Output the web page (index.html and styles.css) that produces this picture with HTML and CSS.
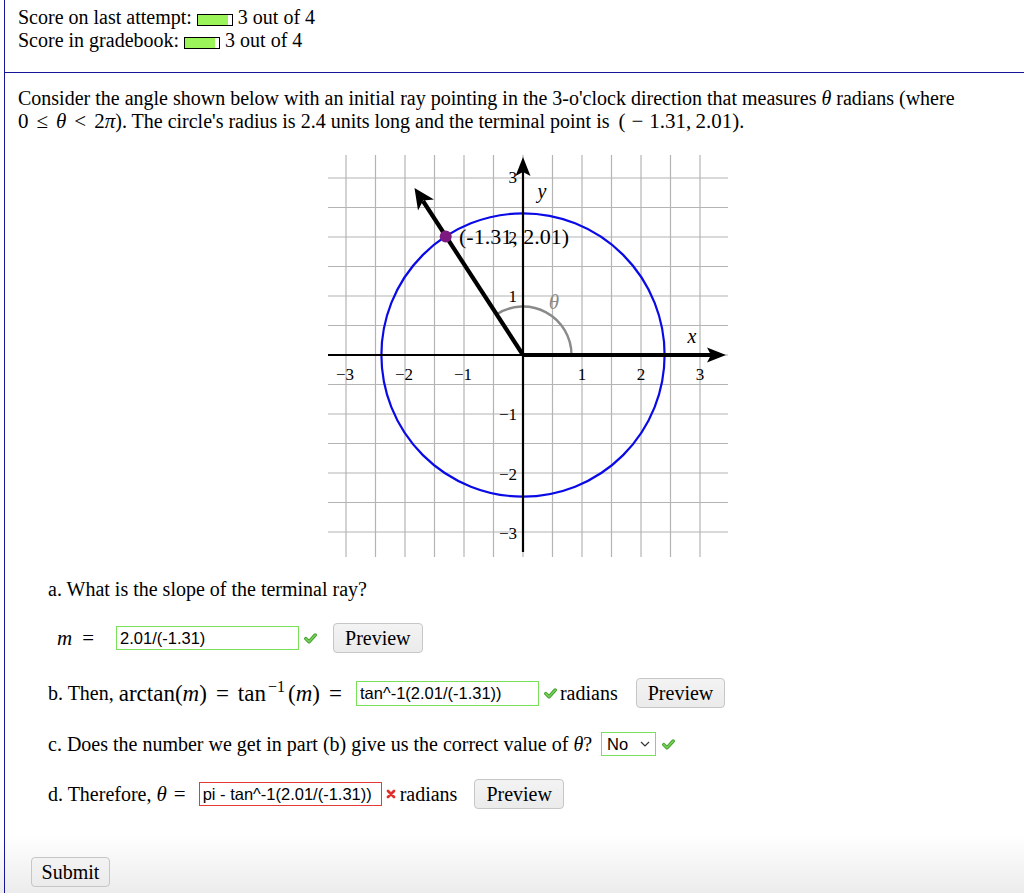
FILE: index.html
```html
<!DOCTYPE html>
<html lang="en">
<head>
<meta charset="utf-8">
<title>Angle question</title>
<link rel="stylesheet" href="styles.css">
</head>
<body>
<div class="page">
  <div class="scores">
    <div class="score-line">Score on last attempt: <span class="bar"><span class="fill"></span></span> 3 out of 4</div>
    <div class="score-line">Score in gradebook: <span class="bar"><span class="fill"></span></span> 3 out of 4</div>
  </div>
  <div class="main">
    <p class="intro">Consider the angle shown below with an initial ray pointing in the 3-o'clock direction that measures <i class="mi">θ</i> radians (where <span class="nowrap imath">0<span class="rel">≤</span><i class="mi">θ</i><span class="rel">&lt;</span>2<i class="mi">π</i></span>). The circle's radius is 2.4 units long and the terminal point is <span class="nowrap imath pt">(<span class="bin">−</span>1.31,&thinsp;2.01)</span>.</p>

    <svg class="graph" width="400" height="402" viewBox="0 0 400 402" xmlns="http://www.w3.org/2000/svg">
      <g class="grid" stroke="#b4b4b4" stroke-width="1.2">
        <line x1="18" y1="0" x2="18" y2="402"/>
        <line x1="47.5" y1="0" x2="47.5" y2="402"/>
        <line x1="77" y1="0" x2="77" y2="402"/>
        <line x1="106.5" y1="0" x2="106.5" y2="402"/>
        <line x1="136" y1="0" x2="136" y2="402"/>
        <line x1="165.5" y1="0" x2="165.5" y2="402"/>
        <line x1="195" y1="0" x2="195" y2="402"/>
        <line x1="224.5" y1="0" x2="224.5" y2="402"/>
        <line x1="254" y1="0" x2="254" y2="402"/>
        <line x1="283.5" y1="0" x2="283.5" y2="402"/>
        <line x1="313" y1="0" x2="313" y2="402"/>
        <line x1="342.5" y1="0" x2="342.5" y2="402"/>
        <line x1="372" y1="0" x2="372" y2="402"/>
        <line x1="0" y1="23" x2="400" y2="23"/>
        <line x1="0" y1="52.5" x2="400" y2="52.5"/>
        <line x1="0" y1="82" x2="400" y2="82"/>
        <line x1="0" y1="111.5" x2="400" y2="111.5"/>
        <line x1="0" y1="141" x2="400" y2="141"/>
        <line x1="0" y1="170.5" x2="400" y2="170.5"/>
        <line x1="0" y1="200" x2="400" y2="200"/>
        <line x1="0" y1="229.5" x2="400" y2="229.5"/>
        <line x1="0" y1="259" x2="400" y2="259"/>
        <line x1="0" y1="288.5" x2="400" y2="288.5"/>
        <line x1="0" y1="318" x2="400" y2="318"/>
        <line x1="0" y1="347.5" x2="400" y2="347.5"/>
        <line x1="0" y1="377" x2="400" y2="377"/>
      </g>
      <circle cx="195" cy="200" r="141.6" fill="none" stroke="#0a0ae6" stroke-width="2.2"/>
      <path d="M243.5 200 A48.5 48.5 0 0 0 168.5 159.4" fill="none" stroke="#8a8a8a" stroke-width="2.4"/>
      <line x1="0" y1="200" x2="383" y2="200" stroke="#000" stroke-width="2.2"/>
      <polygon points="398,200 379,192.5 383,200 379,207.5" fill="#000"/>
      <line x1="195" y1="397" x2="195" y2="17" stroke="#000" stroke-width="2.2"/>
      <polygon points="195,2 187.5,21 195,17 202.5,21" fill="#000"/>
      <line x1="195" y1="200" x2="383" y2="200" stroke="#000" stroke-width="4.2"/>
      <line x1="195" y1="200" x2="95" y2="46" stroke="#000" stroke-width="4.2"/>
      <polygon points="86.5,33 106,44.5 95.2,45.6 90,55.5" fill="#000"/>
      <circle cx="117.7" cy="81.4" r="6" fill="#7d1a80"/>
      <g class="ticks" font-family="'Liberation Serif', serif" font-size="17" fill="#000">
        <text x="17" y="225" text-anchor="middle">−3</text>
        <text x="76" y="225" text-anchor="middle">−2</text>
        <text x="135" y="225" text-anchor="middle">−1</text>
        <text x="254" y="225" text-anchor="middle">1</text>
        <text x="313" y="225" text-anchor="middle">2</text>
        <text x="372" y="225" text-anchor="middle">3</text>
        <text x="189" y="28" text-anchor="end">3</text>
        <text x="189" y="88" text-anchor="end">2</text>
        <text x="189" y="147" text-anchor="end">1</text>
        <text x="189" y="265" text-anchor="end">−1</text>
        <text x="189" y="325" text-anchor="end">−2</text>
        <text x="189" y="384" text-anchor="end">−3</text>
      </g>
      <text x="131" y="89" font-family="'Liberation Serif', serif" font-size="22" fill="#000">(-1.31, 2.01)</text>
      <text x="214" y="43" font-family="'Liberation Serif', serif" font-size="20" font-style="italic" text-anchor="middle" fill="#000">y</text>
      <text x="364" y="188" font-family="'Liberation Serif', serif" font-size="20" font-style="italic" text-anchor="middle" fill="#000">x</text>
      <text x="226" y="154" font-family="'Liberation Serif', serif" font-size="21" font-style="italic" text-anchor="middle" fill="#8a8a8a">θ</text>
    </svg>

    <div class="row row-a1"><span>a. What is the slope of the terminal ray?</span></div>

    <div class="row row-a2">
      <span class="math"><i class="mi">m</i><span class="rel">=</span></span>
      <span class="field ok field-a">2.01/(-1.31)</span>
      <svg class="mark" width="13" height="11" viewBox="0 0 13 11"><path d="M1.8 5.6 L5 8.8 L11.2 2" fill="none" stroke="#3f9f2a" stroke-width="3.4" stroke-linecap="round" stroke-linejoin="round"/><path d="M1.8 5.6 L5 8.8 L11.2 2" fill="none" stroke="#7ad05a" stroke-width="1.6" stroke-linecap="round" stroke-linejoin="round"/></svg>
      <button class="btn btn-a">Preview</button>
    </div>

    <div class="row row-b">
      <span>b. Then,</span>
      <span class="math math-b">arctan(<i class="mi">m</i>)<span class="rel">=</span>tan<sup class="sup">−1</sup>(<i class="mi">m</i>)<span class="rel rel-last">=</span></span>
      <span class="field ok field-b">tan^-1(2.01/(-1.31))</span>
      <svg class="mark" width="13" height="11" viewBox="0 0 13 11"><path d="M1.8 5.6 L5 8.8 L11.2 2" fill="none" stroke="#3f9f2a" stroke-width="3.4" stroke-linecap="round" stroke-linejoin="round"/><path d="M1.8 5.6 L5 8.8 L11.2 2" fill="none" stroke="#7ad05a" stroke-width="1.6" stroke-linecap="round" stroke-linejoin="round"/></svg>
      <span class="unit">radians</span>
      <button class="btn btn-b">Preview</button>
    </div>

    <div class="row row-c">
      <span>c. Does the number we get in part (b) give us the correct value of <i class="mi">θ</i>?</span>
      <span class="select ok">No<svg class="chev" width="10" height="6" viewBox="0 0 10 6"><path d="M1 1 L5 5 L9 1" fill="none" stroke="#333" stroke-width="1.2"/></svg></span>
      <svg class="mark mark-c" width="13" height="11" viewBox="0 0 13 11"><path d="M1.8 5.6 L5 8.8 L11.2 2" fill="none" stroke="#3f9f2a" stroke-width="3.4" stroke-linecap="round" stroke-linejoin="round"/><path d="M1.8 5.6 L5 8.8 L11.2 2" fill="none" stroke="#7ad05a" stroke-width="1.6" stroke-linecap="round" stroke-linejoin="round"/></svg>
    </div>

    <div class="row row-d">
      <span>d. Therefore, <span class="math"><i class="mi">θ</i><span class="rel">=</span></span></span>
      <span class="field bad field-d">pi - tan^-1(2.01/(-1.31))</span>
      <svg class="mark mark-x" width="10" height="10" viewBox="0 0 10 10"><path d="M2 2 L8 8 M8 2 L2 8" fill="none" stroke="#e0302c" stroke-width="2.8" stroke-linecap="round"/></svg>
      <span class="unit unit-d">radians</span>
      <button class="btn btn-d">Preview</button>
    </div>

    <button class="btn submit">Submit</button>
  </div>
</div>
</body>
</html>
```

FILE: styles.css
```css
html {
  height: 100%;
  overflow: hidden;
  background: linear-gradient(to bottom, #ffffff 0, #ffffff 835px, #ececec 893px);
}

body {
  margin: 0;
  font-family: "Liberation Serif", "Times New Roman", serif;
  font-size: 20px;
  line-height: 23px;
  color: #000;
}

.page {
  margin-left: 4px;
  border-left: 1px solid #16169a;
  min-height: 893px;
}

.scores {
  padding: 6px 13px 20px;
  height: 46px;
}

.bar {
  display: inline-block;
  width: 34px;
  height: 10px;
  border: 1px solid #000;
  vertical-align: -2px;
  background: #fff;
}

.bar .fill {
  display: block;
  width: 30px;
  height: 10px;
  background: #9bf55a;
}

.main {
  border-top: 1px solid #16169a;
  padding-top: 14px;
}

.intro {
  margin: 0 0 0 13px;
}

.nowrap {
  white-space: nowrap;
}

.imath {
  font-size: 21px;
}

.imath .rel {
  margin: 0 8px;
}

.pt {
  margin-left: 4px;
  word-spacing: 1px;
}

.mi {
  font-style: italic;
}

.rel {
  margin: 0 7px;
}

.bin {
  margin: 0 6px;
}

.graph {
  display: block;
  margin: 22px 0 0 323px;
}

.row {
  display: flex;
  align-items: center;
  height: 30px;
  margin-left: 43px;
  white-space: nowrap;
}

.row-a1 { margin-top: 17px; }
.row-a2 { margin-top: 19px; margin-left: 52px; }
.row-b { margin-top: 25px; }
.row-c { margin-top: 21px; }
.row-d { margin-top: 20px; }

.math {
  font-size: 21px;
}

.row-a2 .math .rel {
  margin: 0 0 0 10px;
}

.math-b {
  margin-left: 5px;
  font-size: 23px;
}

.math-b .rel {
  margin: 0 9px;
}

.math-b .rel-last {
  margin-right: 0;
}

.sup {
  font-size: 16px;
  vertical-align: 9px;
  line-height: 0;
  margin: 0 3px 0 2px;
}

.field {
  box-sizing: border-box;
  display: flex;
  align-items: center;
  width: 183px;
  height: 24px;
  padding: 0 3px;
  font-family: "Liberation Sans", Arial, sans-serif;
  font-size: 16.5px;
  background: #fff;
}

.ok { border: 1px solid #78e05a; }
.bad { border: 1px solid #e33b36; }

.field-a { margin-left: 22px; }
.field-b { margin-left: 14px; height: 25px; }
.field-d { margin-left: 6px; }

.mark {
  margin-left: 5px;
  flex: none;
}

.mark-c { margin-left: 6px; }
.mark-x { margin-left: 4px; }

.unit { margin-left: 3px; }
.unit-d { margin-left: 4px; }

.select {
  box-sizing: border-box;
  display: flex;
  align-items: center;
  justify-content: space-between;
  width: 55px;
  height: 24px;
  margin-left: 9px;
  padding: 0 5px;
  font-family: "Liberation Sans", Arial, sans-serif;
  font-size: 16.5px;
  background: #fff;
}

.btn {
  box-sizing: border-box;
  height: 30px;
  padding: 0 11px;
  font-family: "Liberation Serif", "Times New Roman", serif;
  font-size: 20px;
  color: #000;
  background: linear-gradient(#f3f3f3, #ebebeb);
  border: 1px solid #c6c6c6;
  border-radius: 4px;
}

.btn-a { margin-left: 16px; }
.btn-b { margin-left: 18px; }
.btn-d { margin-left: 17px; }

.submit {
  display: block;
  margin: 48px 0 0 26px;
  width: 79px;
  padding: 0;
}
```
